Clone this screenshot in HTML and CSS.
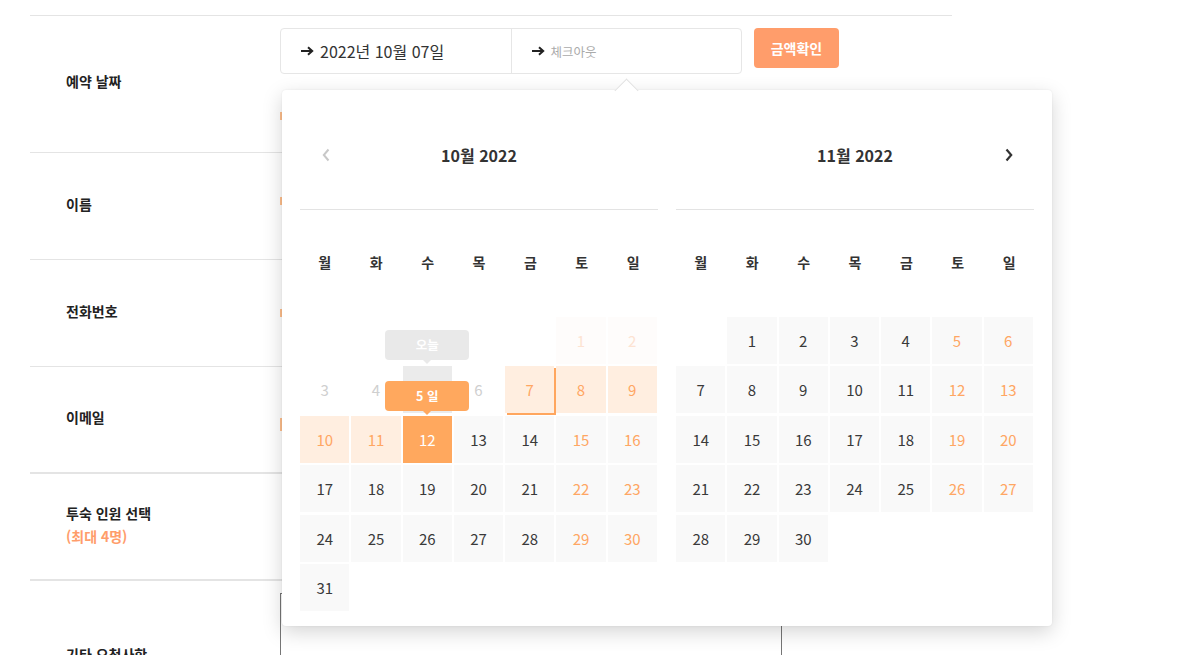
FILE: index.html
```html
<!DOCTYPE html>
<html lang="ko">
<head>
<meta charset="utf-8">
<title>예약</title>
<link rel="stylesheet" href="styles.css">
</head>
<body>
<div class="form">
  <div class="row r1">
    <div class="label">예약 날짜</div>
    <div class="field field-top">
      <div class="date-line">
        <div class="date-input">
          <div class="date-half">
            <svg class="arrow" viewBox="0 0 14 10" width="14" height="10"><path d="M1 5H12M8 1.2L12.2 5L8 8.8" fill="none" stroke="#222" stroke-width="2"/></svg>
            <span class="date-val">2022년 10월 07일</span>
          </div>
          <div class="date-half">
            <svg class="arrow" viewBox="0 0 14 10" width="14" height="10"><path d="M1 5H12M8 1.2L12.2 5L8 8.8" fill="none" stroke="#222" stroke-width="2"/></svg>
            <span class="date-ph">체크아웃</span>
          </div>
        </div>
        <button class="btn">금액확인</button>
      </div>
      <div class="mark m1"></div>
    </div>
  </div>
  <div class="row r2">
    <div class="label">이름</div>
    <div class="field"><div class="mark m2"></div></div>
  </div>
  <div class="row r3">
    <div class="label">전화번호</div>
    <div class="field"><div class="mark"></div></div>
  </div>
  <div class="row r4">
    <div class="label">이메일</div>
    <div class="field"><div class="mark m4"></div></div>
  </div>
  <div class="row r5 thick">
    <div class="label">투숙 인원 선택<span class="sub">(최대 4명)</span></div>
    <div class="field"></div>
  </div>
  <div class="row r6 thick">
    <div class="label">기타 요청사항</div>
    <div class="field field-top"><textarea class="memo"></textarea></div>
  </div>
</div>

<div class="picker">
  <div class="month">
    <div class="month-head">
      <span class="nav prev"><svg viewBox="0 0 8 14" width="8" height="14"><path d="M6.5 1.5L1.8 7L6.5 12.5" fill="none" stroke="#c8c8c8" stroke-width="2"/></svg></span>
      <span class="title">10월 2022</span>
      <span class="nav"></span>
    </div>
    <div class="weekdays"><span>월</span><span>화</span><span>수</span><span>목</span><span>금</span><span>토</span><span>일</span></div>
    <div class="days">
      <span class="empty"></span><span class="empty"></span><span class="empty"></span><span class="empty"></span><span class="empty"></span>
      <span class="day faint">1</span><span class="day faint">2</span>
      <span class="day off">3</span><span class="day off">4</span>
      <span class="day today">5<span class="tip tip-grey">오늘</span></span>
      <span class="day off">6</span>
      <span class="day range start">7</span><span class="day range">8</span><span class="day range">9</span>
      <span class="day range">10</span><span class="day range">11</span>
      <span class="day sel">12<span class="tip tip-orange">5 일</span></span>
      <span class="day">13</span><span class="day">14</span><span class="day we">15</span><span class="day we">16</span>
      <span class="day">17</span><span class="day">18</span><span class="day">19</span><span class="day">20</span><span class="day">21</span><span class="day we">22</span><span class="day we">23</span>
      <span class="day">24</span><span class="day">25</span><span class="day">26</span><span class="day">27</span><span class="day">28</span><span class="day we">29</span><span class="day we">30</span>
      <span class="day">31</span>
    </div>
  </div>
  <div class="month">
    <div class="month-head">
      <span class="nav"></span>
      <span class="title">11월 2022</span>
      <span class="nav next"><svg viewBox="0 0 8 14" width="8" height="14"><path d="M1.5 1.5L6.2 7L1.5 12.5" fill="none" stroke="#333" stroke-width="2.2"/></svg></span>
    </div>
    <div class="weekdays"><span>월</span><span>화</span><span>수</span><span>목</span><span>금</span><span>토</span><span>일</span></div>
    <div class="days">
      <span class="empty"></span>
      <span class="day">1</span><span class="day">2</span><span class="day">3</span><span class="day">4</span><span class="day we">5</span><span class="day we">6</span>
      <span class="day">7</span><span class="day">8</span><span class="day">9</span><span class="day">10</span><span class="day">11</span><span class="day we">12</span><span class="day we">13</span>
      <span class="day">14</span><span class="day">15</span><span class="day">16</span><span class="day">17</span><span class="day">18</span><span class="day we">19</span><span class="day we">20</span>
      <span class="day">21</span><span class="day">22</span><span class="day">23</span><span class="day">24</span><span class="day">25</span><span class="day we">26</span><span class="day we">27</span>
      <span class="day">28</span><span class="day">29</span><span class="day">30</span>
    </div>
  </div>
</div>
</body>
</html>
```
FILE: styles.css
```css
* { box-sizing: border-box; }

body {
  margin: 0;
  width: 1189px;
  height: 655px;
  overflow: hidden;
  position: relative;
  background: #fff;
  color: #333;
  font-family: "Noto Sans CJK KR", "Noto Sans", sans-serif;
}

.form {
  margin-left: 30px;
  width: 922px;
  padding-top: 15px;
}

.row {
  display: grid;
  grid-template-columns: 250px 1fr;
  border-top: 1px solid #e4e4e4;
}
.row.thick { border-top-width: 2px; }
.r1 { height: 137px; }
.r2 { height: 107px; }
.r3 { height: 107px; }
.r4 { height: 106px; }
.r5 { height: 107px; }
.r6 { height: 156px; }

.label {
  align-self: center;
  padding-left: 36px;
  padding-bottom: 4px;
  font-size: 14px;
  font-weight: 700;
  line-height: 23px;
  color: #222;
}
.r1 .label { padding-bottom: 5px; }
.r6 .label { padding-bottom: 8px; }
.label .sub {
  display: block;
  color: #ff9d6b;
}

.field {
  display: flex;
  flex-direction: column;
  justify-content: center;
}
.field-top {
  justify-content: flex-start;
  padding-top: 12px;
}

.mark {
  width: 2px;
  height: 8px;
  background: #ffbf8c;
}
.m1 { margin-top: 38px; }
.m2 { margin-bottom: 10px; }
.m4 { height: 13px; margin-top: 10px; }

.date-line {
  display: flex;
  align-items: flex-start;
  gap: 12px;
}
.date-input {
  display: flex;
  width: 462px;
  height: 46px;
  border: 1px solid #e6e6e6;
  border-radius: 4px;
}
.date-half {
  flex: 1;
  display: flex;
  align-items: center;
  gap: 6px;
  padding-left: 19px;
}
.date-half + .date-half { border-left: 1px solid #e6e6e6; }
.date-val { font-size: 16px; color: #333; }
.date-ph { font-size: 12.5px; color: #aaa; }

.btn {
  width: 85px;
  height: 40px;
  border: 0;
  border-radius: 4px;
  background: #ff9d6b;
  color: #fff;
  font-family: inherit;
  font-size: 14px;
  font-weight: 700;
}

.memo {
  display: block;
  width: 502px;
  height: 126px;
  border: 1px solid #767676;
  resize: none;
  margin: 0;
}

/* date picker popup */
.picker {
  position: absolute;
  left: 282px;
  top: 90px;
  width: 770px;
  height: 536px;
  background: #fff;
  border-radius: 4px;
  box-shadow: 0 6px 20px rgba(0, 0, 0, 0.17), 0 0 2px rgba(0, 0, 0, 0.08);
  padding: 0 18px;
  display: flex;
  gap: 18px;
}
.picker::before {
  content: "";
  position: absolute;
  left: 336px;
  top: -8px;
  width: 16px;
  height: 16px;
  background: #fff;
  border-top: 1px solid #e2e2e2;
  border-left: 1px solid #e2e2e2;
  transform: rotate(45deg);
}

.month { width: 358px; }

.month-head {
  display: grid;
  grid-template-columns: 51px 1fr 51px;
  align-items: center;
  height: 120px;
  padding: 50px 0 39px;
  border-bottom: 1px solid #e3e3e3;
}
.title {
  text-align: center;
  font-size: 16px;
  font-weight: 700;
  color: #333;
}
.nav {
  display: flex;
  justify-content: center;
  align-items: center;
}

.weekdays {
  display: grid;
  grid-template-columns: repeat(7, 1fr);
  column-gap: 1.8px;
  margin-top: 37px;
  height: 30px;
  line-height: 30px;
  text-align: center;
  font-size: 14px;
  font-weight: 700;
  color: #333;
}

.days {
  display: grid;
  grid-template-columns: repeat(7, 1fr);
  grid-auto-rows: 47px;
  column-gap: 1.8px;
  row-gap: 2.4px;
  margin-top: 40px;
  width: 357px;
}
.day {
  position: relative;
  display: flex;
  align-items: center;
  justify-content: center;
  background: #f9f9f9;
  color: #3a3a3a;
  font-size: 15px;
}
.day.we { color: #ffa663; }
.day.off { background: #fff; color: #cfcfcf; }
.day.faint { background: #fefcfb; color: #fde3d2; }
.day.today { background: #ebebeb; color: #cfcfcf; }
.day.range { background: #ffeee0; color: #ffa663; }
.day.start { box-shadow: 2px 2px 0 0 #ffa65e; }
.day.sel { background: #ffa85e; color: #fff; }

.tip {
  position: absolute;
  left: 50%;
  width: 84px;
  height: 30px;
  margin-left: -42px;
  border-radius: 4px;
  line-height: 30px;
  text-align: center;
  color: #fff;
  font-size: 12.5px;
  font-weight: 700;
  z-index: 2;
}
.tip::after {
  content: "";
  position: absolute;
  left: 50%;
  top: 100%;
  margin-left: -4px;
  border-left: 4px solid transparent;
  border-right: 4px solid transparent;
  border-top: 4px solid transparent;
}
.tip-grey { background: #e9e9e9; bottom: calc(100% + 6px); }
.tip-grey::after { border-top-color: #e9e9e9; }
.tip-orange { background: #ffa85e; bottom: calc(100% + 5px); }
.tip-orange::after { border-top-color: #ffa85e; }
```
